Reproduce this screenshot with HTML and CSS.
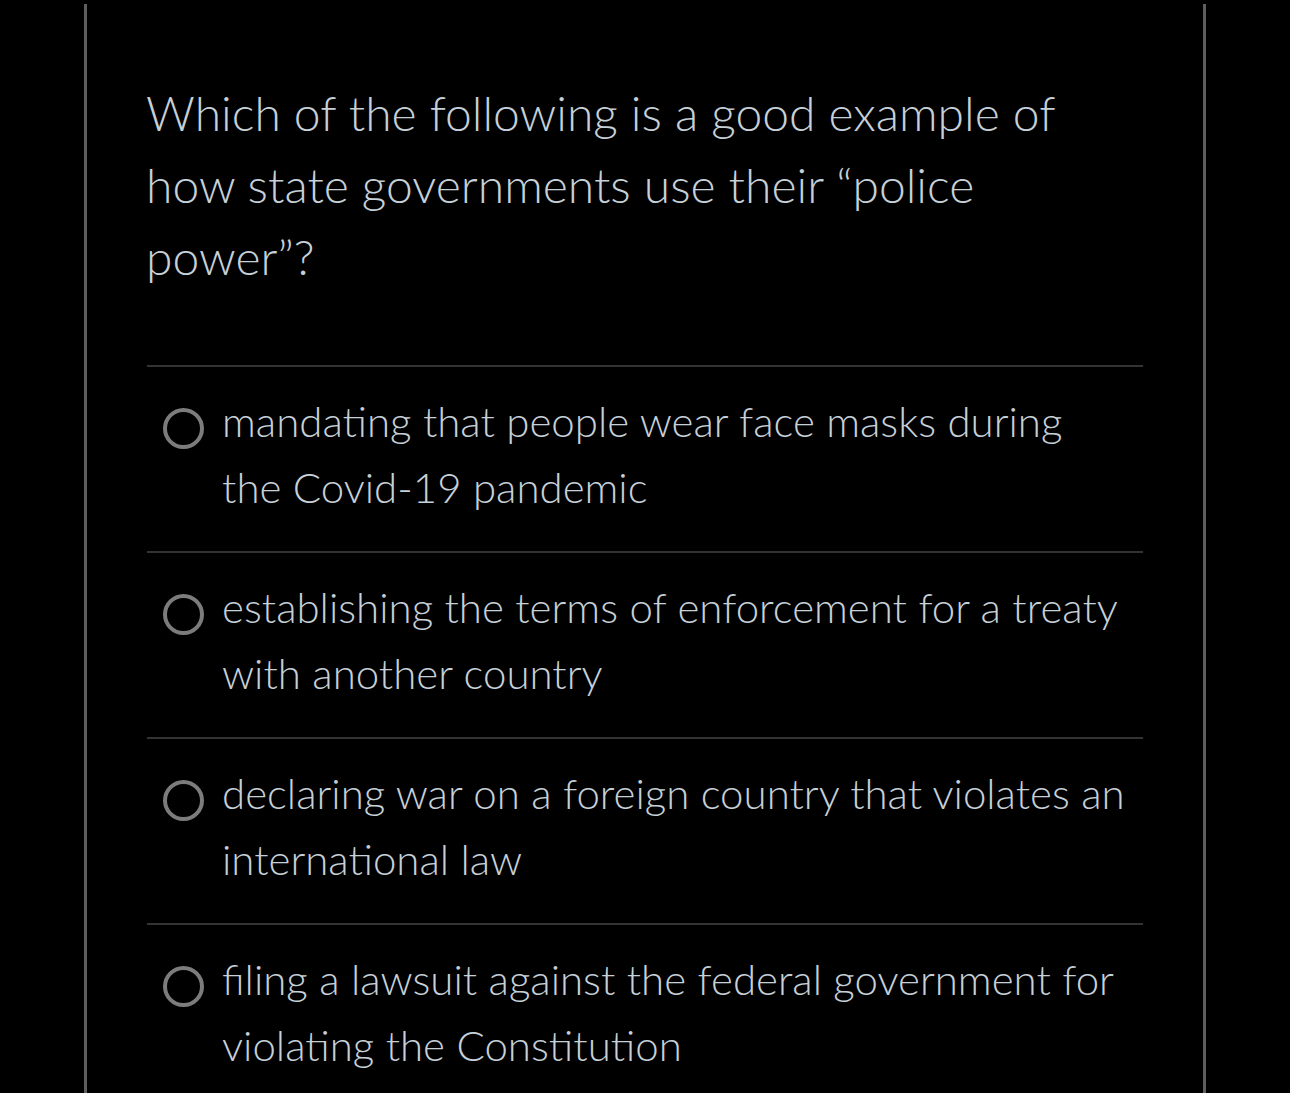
FILE: index.html
```html
<!DOCTYPE html>
<html lang="en">
<head>
<meta charset="utf-8">
<title>Quiz question</title>
<link rel="stylesheet" href="styles.css">
</head>
<body>
<div class="frame">
  <div class="question">Which of the following is a good example of how state governments use their “police power”?</div>
  <div class="answers">
    <div class="answer">
      <span class="radio"></span>
      <span class="answer-text">mandating that people wear face masks during the Covid-19 pandemic</span>
    </div>
    <div class="answer">
      <span class="radio"></span>
      <span class="answer-text">establishing the terms of enforcement for a treaty with another country</span>
    </div>
    <div class="answer">
      <span class="radio"></span>
      <span class="answer-text">declaring war on a foreign country that violates an international law</span>
    </div>
    <div class="answer">
      <span class="radio"></span>
      <span class="answer-text">filing a lawsuit against the federal government for violating the Constitution</span>
    </div>
  </div>
</div>
</body>
</html>
```

FILE: styles.css
```css
html, body {
  margin: 0;
  padding: 0;
  background: #000;
}

body {
  font-family: "Lato Light", "Lato", "Open Sans", sans-serif;
  color: #c6d0d8;
  overflow: hidden;
}

.frame {
  box-sizing: border-box;
  margin: 4px 0 0 84px;
  width: 1122px;
  min-height: calc(100vh - 4px);
  border-left: 3px solid #5e5e5e;
  border-right: 3px solid #5e5e5e;
  padding: 73px 60px 0 60px;
}

.question {
  font-size: 48px;
  font-weight: 300;
  line-height: 72px;
  max-width: 960px;
  margin-left: -1px;
  margin-bottom: 72px;
}

.answers {
  display: flex;
  flex-direction: column;
}

.answer {
  display: flex;
  align-items: flex-start;
  gap: 18px;
  border-top: 2px solid #333;
  padding: 21px 0 31px 16px;
}

.radio {
  flex: none;
  box-sizing: border-box;
  width: 41px;
  height: 41px;
  border: 4px solid #7c7c7c;
  border-radius: 50%;
  margin-top: 20px;
}

.answer-text {
  font-size: 42px;
  font-weight: 300;
  line-height: 66px;
  max-width: 905px;
}
```
